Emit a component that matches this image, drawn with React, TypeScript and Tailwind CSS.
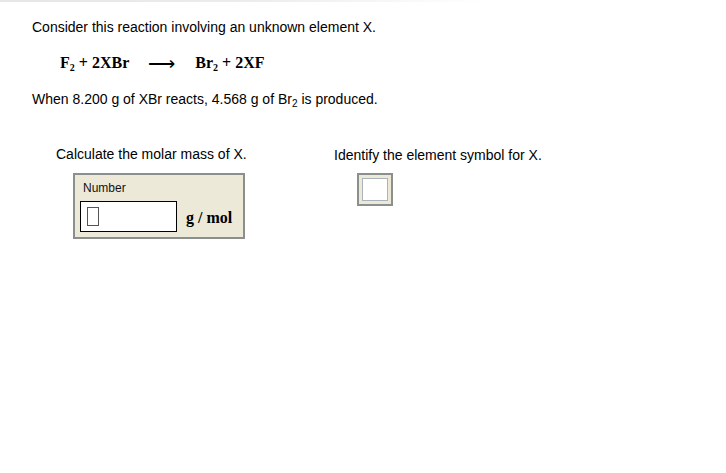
import React from "react";

const sans = "font-['Liberation_Sans',Arial,sans-serif]";
const serif = "font-['Liberation_Serif','Times_New_Roman',serif]";

function Equation() {
  return (
    <div className={`${serif} flex items-center pl-[60px] text-[16px] font-bold text-black`}>
      <span>
        F<sub className="text-[10px]">2</sub> + 2XBr
      </span>
      <span className="ml-[19px] mr-[20px] text-[19px] font-normal leading-none">⟶</span>
      <span>
        Br<sub className="text-[10px]">2</sub> + 2XF
      </span>
    </div>
  );
}

export default function App() {
  return (
    <div className={`${sans} relative h-[473px] w-[726px] bg-white text-black`}>
      <div className="h-[2px] w-[490px] bg-gradient-to-r from-[#e6e6e6] via-[#ececec] to-white" />
      <div className="flex flex-col">
        <p className="mt-[17px] pl-[32px] text-[14px] leading-[17px]">
          Consider this reaction involving an unknown element X.
        </p>
        <div className="mt-[15px] h-[19px]">
          <Equation />
        </div>
        <p className="mt-[21px] pl-[32px] text-[14px] leading-[17px]">
          When 8.200 g of XBr reacts, 4.568 g of Br<sub className="text-[10px]">2</sub> is produced.
        </p>

        <div className="mt-[38px] flex">
          <div className="w-[334px] pl-[56px]">
            <p className="text-[14px] leading-[17px]">Calculate the molar mass of X.</p>
            <div className="ml-[17px] mt-[10px] h-[66px] w-[172px] border-2 border-[#8c908c] bg-[#ece9d8] pl-[8px] pt-[6px]">
              <div className="text-[12px] leading-[14px] text-[#111]">Number</div>
              <div className="-ml-[3px] mt-[6px] flex items-center">
                <div className="flex h-[31px] w-[97px] items-center border border-black bg-white pl-[6px]">
                  <div className="h-[19px] w-[12px] border border-[#555]" />
                </div>
                <span className={`${serif} ml-[9px] mt-[2px] text-[16px] font-bold`}>g / mol</span>
              </div>
            </div>
          </div>
          <div>
            <p className="mt-[1px] text-[14px] leading-[17px]">Identify the element symbol for X.</p>
            <div className="ml-[23px] mt-[9px] h-[33px] w-[36px] border-2 border-[#8c908c] bg-[#ece9d8] p-[3px]">
              <div className="h-full w-full border border-[#a9b4bc] bg-white" />
            </div>
          </div>
        </div>
      </div>
    </div>
  );
}
